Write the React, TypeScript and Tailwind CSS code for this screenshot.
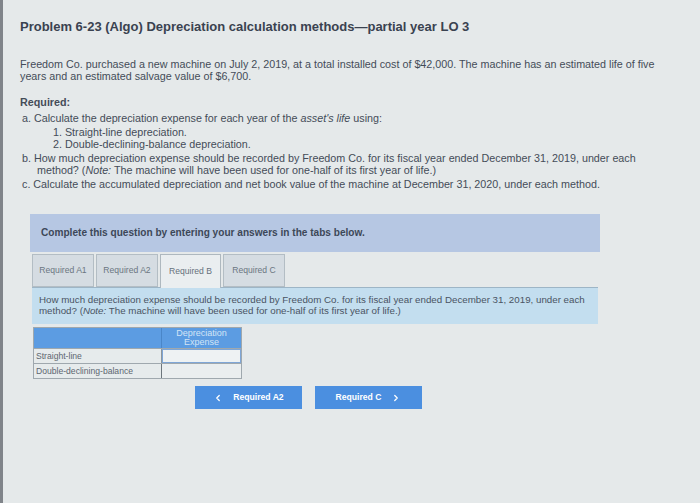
import { ChevronLeft, ChevronRight } from 'lucide-react';

const tabs = ['Required A1', 'Required A2', 'Required B', 'Required C'];

export default function App() {
  return (
    <div className="w-[700px] h-[503px] overflow-hidden bg-[#e5e9ea] border-l-[3px] border-[#80848a] font-['Liberation_Sans',Arial,sans-serif] text-[#3b4350]">
      <div className="pl-[17px] pt-[19px]">
        {/* Title */}
        <h1 className="text-[13px] font-bold leading-[16px] text-[#3a4250]">
          Problem 6-23 (Algo) Depreciation calculation methods—partial year LO 3
        </h1>

        {/* Problem text */}
        <div className="mt-[23px] text-[10.75px] leading-[12px] text-[#444c58]">
          <p>
            Freedom Co. purchased a new machine on July 2, 2019, at a total installed cost of $42,000. The machine has an estimated life of five
            <br />
            years and an estimated salvage value of $6,700.
          </p>
          <p className="mt-[14px] font-semibold">Required:</p>
          <div className="mt-[4px] pl-[2px]">
            <p className="leading-[12px]">
              a. Calculate the depreciation expense for each year of the <i>asset's life</i> using:
            </p>
            <p className="pl-[31px] mt-[2px] leading-[12px]">1. Straight-line depreciation.</p>
            <p className="pl-[31px] leading-[12px]">2. Double-declining-balance depreciation.</p>
            <p className="mt-[2px] leading-[12px]">
              b. How much depreciation expense should be recorded by Freedom Co. for its fiscal year ended December 31, 2019, under each
            </p>
            <p className="pl-[15px] leading-[12px]">
              method? (<i>Note:</i> The machine will have been used for one-half of its first year of life.)
            </p>
            <p className="mt-[2px] leading-[12px]">
              c. Calculate the accumulated depreciation and net book value of the machine at December 31, 2020, under each method.
            </p>
          </div>
        </div>
      </div>

      {/* Question area */}
      <div className="ml-[27px] mt-[24px] w-[570px]">
        <div className="h-[38px] bg-[#b6c7e3] flex items-center pl-[11px]">
          <span className="text-[10.1px] font-bold text-[#3d4858]">
            Complete this question by entering your answers in the tabs below.
          </span>
        </div>

        <div className="mt-[2px] ml-[2px] flex items-end gap-[2px]">
          {tabs.map((t) => {
            const active = t === 'Required B';
            return (
              <div
                key={t}
                className={
                  active
                    ? 'w-[61px] h-[34px] mb-[-1px] bg-[#eaeef0] border border-b-0 border-[#aeb8bf] flex items-center justify-center text-[8.6px] text-[#66717c]'
                    : 'w-[62px] h-[33px] bg-[#d5dce2] border border-[#b3bdc4] flex items-center justify-center text-[8.6px] text-[#6b7681]'
                }
              >
                {t}
              </div>
            );
          })}
        </div>

        <div className="ml-[2px] w-[566px] h-[37px] bg-[#c3deef] border-t border-[#9db5c6] pl-[7px] pt-[6px] text-[9.75px] leading-[11px] text-[#4a5463]">
          How much depreciation expense should be recorded by Freedom Co. for its fiscal year ended December 31, 2019, under each
          <br />
          method? (<i>Note:</i> The machine will have been used for one-half of its first year of life.)
        </div>

        {/* Table */}
        <div className="ml-[3px] mt-[3px] w-[209px] border border-[#9fa8ae] text-[8.6px]">
          <div className="flex h-[20px] bg-[#5c9ce2]">
            <div className="w-[128px] border-r border-[#4a86c8]" />
            <div className="flex-1 flex flex-col items-center justify-center leading-[9px] text-[9px] text-[#d3e4f6]">
              <span>Depreciation</span>
              <span>Expense</span>
            </div>
          </div>
          <div className="flex h-[15px] bg-[#e6ebec] border-t border-[#9fa8ae]">
            <div className="w-[128px] border-r border-[#8c969c] pl-[2px] flex items-center text-[#5d6670]">Straight-line</div>
            <div className="flex-1 border border-[#7fa6d6] bg-[#eef2f3]" />
          </div>
          <div className="flex h-[15px] bg-[#e6ebec] border-t border-[#9fa8ae]">
            <div className="w-[128px] border-r border-[#6d767c] pl-[2px] flex items-center text-[#5d6670]">Double-declining-balance</div>
            <div className="flex-1 bg-[#eaeeef]" />
          </div>
        </div>

        {/* Nav buttons */}
        <div className="mt-[7px] ml-[165px] flex gap-[13px]">
          <button className="w-[107px] h-[23px] bg-[#4b8fe0] flex items-center justify-center gap-[4px] text-white text-[8.6px] font-bold">
            <ChevronLeft size={10} strokeWidth={3} className="mr-[6px]" />
            Required A2
          </button>
          <button className="w-[107px] h-[23px] bg-[#4b8fe0] flex items-center justify-center gap-[4px] text-white text-[8.6px] font-bold">
            Required C
            <ChevronRight size={10} strokeWidth={3} className="ml-[6px]" />
          </button>
        </div>
      </div>
    </div>
  );
}
